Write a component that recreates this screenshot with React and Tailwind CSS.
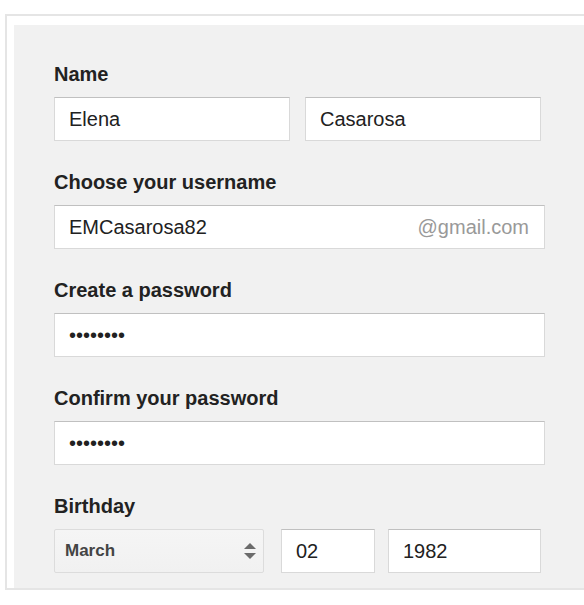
import { useState } from "react";

const font = { fontFamily: '"Liberation Sans", Arial, sans-serif' };

const inputCls =
  "h-[44px] border border-[#d9d9d9] border-t-[#c0c0c0] bg-white pl-[14px] text-[20px] text-[#212121] outline-none";

function Label({ children }) {
  return (
    <label className="mb-[12px] block text-[20px] font-bold leading-[22px] text-[#222]">
      {children}
    </label>
  );
}

function Field({ label, first, children }) {
  return (
    <div className={first ? "" : "mt-[30px]"}>
      <Label>{label}</Label>
      {children}
    </div>
  );
}

function SelectArrows() {
  return (
    <svg
      width="12"
      height="17"
      viewBox="0 0 12 17"
      className="pointer-events-none absolute right-[8px] top-[14px]"
    >
      <path d="M6 0 L12 6 L0 6 Z" fill="#6b6b6b" />
      <path d="M0 10 L12 10 L6 16 Z" fill="#6b6b6b" />
    </svg>
  );
}

export default function App() {
  const [month, setMonth] = useState("March");

  return (
    <div className="h-[605px] w-[584px] overflow-hidden bg-white pl-[5px] pt-[14px]" style={font}>
      <div className="h-[576px] border-2 border-r-0 border-[#e5e5e5] pl-[7px] pt-[9px]">
        <form className="h-full bg-[#f1f1f1] pl-[40px] pt-[38px]">
          <div className="w-[491px]">
            <Field label="Name" first>
              <div className="flex gap-[15px]">
                <input readOnly defaultValue="Elena" className={`${inputCls} w-[236px]`} />
                <input readOnly defaultValue="Casarosa" className={`${inputCls} w-[236px]`} />
              </div>
            </Field>

            <Field label="Choose your username">
              <div className="flex h-[44px] items-center border border-[#d9d9d9] border-t-[#c0c0c0] bg-white pr-[15px]">
                <input
                  readOnly
                  defaultValue="EMCasarosa82"
                  className="h-full min-w-0 flex-1 bg-transparent pl-[14px] text-[20px] text-[#212121] outline-none"
                />
                <span className="text-[20px] text-[#999]">@gmail.com</span>
              </div>
            </Field>

            <Field label="Create a password">
              <input readOnly value="••••••••" className={`${inputCls} w-full`} />
            </Field>

            <Field label="Confirm your password">
              <input readOnly value="••••••••" className={`${inputCls} w-full`} />
            </Field>

            <Field label="Birthday">
              <div className="flex">
                <div className="relative w-[210px]">
                  <select
                    value={month}
                    onChange={(e) => setMonth(e.target.value)}
                    className="h-[44px] w-full appearance-none rounded-[2px] border border-[#dcdcdc] bg-gradient-to-b from-[#f5f5f5] to-[#f1f1f1] pl-[10px] text-[17px] font-bold text-[#444] outline-none"
                  >
                    <option>January</option>
                    <option>February</option>
                    <option>March</option>
                    <option>April</option>
                  </select>
                  <SelectArrows />
                </div>
                <input readOnly defaultValue="02" className={`${inputCls} ml-[17px] w-[94px]`} />
                <input readOnly defaultValue="1982" className={`${inputCls} ml-[13px] w-[153px]`} />
              </div>
            </Field>
          </div>
        </form>
      </div>
    </div>
  );
}
